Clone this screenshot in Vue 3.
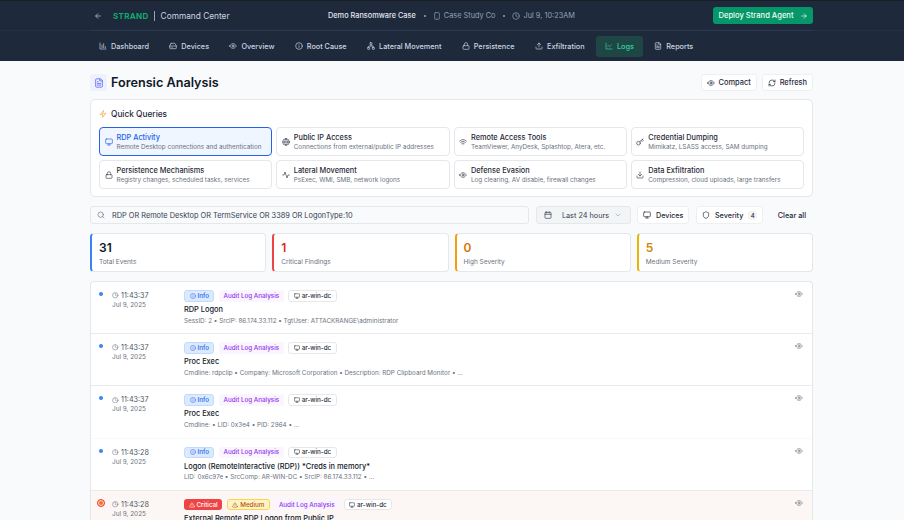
<script setup>
const icons = {
  back: '<path d="M19 12H5"/><path d="m12 19-7-7 7-7"/>',
  arrow: '<path d="M5 12h14"/><path d="m12 5 7 7-7 7"/>',
  tablet: '<rect x="5" y="2" width="14" height="20" rx="2"/><path d="M12 18h.01"/>',
  clock: '<circle cx="12" cy="12" r="10"/><path d="M12 6v6l4 2"/>',
  chart: '<path d="M3 3v18h18"/><path d="M9 17V9"/><path d="M14 17V5"/><path d="M19 17v-3"/>',
  drive: '<path d="M22 12H2"/><path d="M5.45 5.11 2 12v6a2 2 0 0 0 2 2h16a2 2 0 0 0 2-2v-6l-3.45-6.89A2 2 0 0 0 16.76 4H7.24a2 2 0 0 0-1.79 1.11z"/><path d="M6 16h.01"/><path d="M10 16h.01"/>',
  eye: '<path d="M2 12s3.5-7 10-7 10 7 10 7-3.5 7-10 7-10-7-10-7z"/><circle cx="12" cy="12" r="3"/>',
  info: '<circle cx="12" cy="12" r="10"/><path d="M12 16v-4"/><path d="M12 8h.01"/>',
  network: '<rect x="16" y="16" width="6" height="6" rx="1"/><rect x="2" y="16" width="6" height="6" rx="1"/><rect x="9" y="2" width="6" height="6" rx="1"/><path d="M5 16v-3a1 1 0 0 1 1-1h12a1 1 0 0 1 1 1v3"/><path d="M12 12V8"/>',
  lock: '<rect x="3" y="11" width="18" height="11" rx="2"/><path d="M7 11V7a5 5 0 0 1 10 0v4"/>',
  upload: '<path d="M21 15v4a2 2 0 0 1-2 2H5a2 2 0 0 1-2-2v-4"/><path d="m17 8-5-5-5 5"/><path d="M12 3v12"/>',
  line: '<path d="M3 3v18h18"/><path d="m19 9-5 5-4-4-3 3"/>',
  file: '<path d="M15 2H6a2 2 0 0 0-2 2v16a2 2 0 0 0 2 2h12a2 2 0 0 0 2-2V7z"/><path d="M14 2v5h6"/><path d="M16 13H8"/><path d="M16 17H8"/><path d="M10 9H8"/>',
  refresh: '<path d="M3 12a9 9 0 0 1 9-9 9.75 9.75 0 0 1 6.74 2.74L21 8"/><path d="M21 3v5h-5"/><path d="M21 12a9 9 0 0 1-9 9 9.75 9.75 0 0 1-6.74-2.74L3 16"/><path d="M8 16H3v5"/>',
  zap: '<path d="M13 2 3 14h9l-1 8 10-12h-9z"/>',
  monitor: '<rect x="2" y="3" width="20" height="14" rx="2"/><path d="M8 21h8"/><path d="M12 17v4"/>',
  globe: '<circle cx="12" cy="12" r="10"/><path d="M2 12h20"/><path d="M12 2a15 15 0 0 1 4 10 15 15 0 0 1-4 10 15 15 0 0 1-4-10 15 15 0 0 1 4-10z"/>',
  wifi: '<path d="M12 20h.01"/><path d="M2 8.82a15 15 0 0 1 20 0"/><path d="M5 12.86a10 10 0 0 1 14 0"/><path d="M8.5 16.43a5 5 0 0 1 7 0"/>',
  key: '<circle cx="7.5" cy="15.5" r="5.5"/><path d="m21 2-9.6 9.6"/><path d="m15.5 7.5 3 3L22 7l-3-3"/>',
  activity: '<path d="M22 12h-4l-3 9L9 3l-3 9H2"/>',
  download: '<path d="M21 15v4a2 2 0 0 1-2 2H5a2 2 0 0 1-2-2v-4"/><path d="m7 10 5 5 5-5"/><path d="M12 15V3"/>',
  search: '<circle cx="11" cy="11" r="8"/><path d="m21 21-4.3-4.3"/>',
  calendar: '<rect x="3" y="4" width="18" height="18" rx="2"/><path d="M16 2v4"/><path d="M8 2v4"/><path d="M3 10h18"/>',
  chevron: '<path d="m6 9 6 6 6-6"/>',
  shield: '<path d="M20 13c0 5-3.5 7.5-7.66 8.95a1 1 0 0 1-.67-.01C7.5 20.5 4 18 4 13V6a1 1 0 0 1 1-1c2 0 4.5-1.2 6.24-2.72a1.17 1.17 0 0 1 1.52 0C14.51 3.81 17 5 19 5a1 1 0 0 1 1 1z"/>',
  triangle: '<path d="m21.73 18-8-14a2 2 0 0 0-3.48 0l-8 14A2 2 0 0 0 4 21h16a2 2 0 0 0 1.73-3z"/><path d="M12 9v4"/><path d="M12 17h.01"/>'
}
const nav = [
  ['chart', 'Dashboard'], ['drive', 'Devices'], ['eye', 'Overview'], ['info', 'Root Cause'],
  ['network', 'Lateral Movement'], ['lock', 'Persistence'], ['upload', 'Exfiltration'],
  ['line', 'Logs', true], ['file', 'Reports']
]
const queries = [
  ['monitor', 'RDP Activity', 'Remote Desktop connections and authentication', true],
  ['globe', 'Public IP Access', 'Connections from external/public IP addresses'],
  ['wifi', 'Remote Access Tools', 'TeamViewer, AnyDesk, Splashtop, Atera, etc.'],
  ['key', 'Credential Dumping', 'Mimikatz, LSASS access, SAM dumping'],
  ['lock', 'Persistence Mechanisms', 'Registry changes, scheduled tasks, services'],
  ['activity', 'Lateral Movement', 'PsExec, WMI, SMB, network logons'],
  ['eye', 'Defense Evasion', 'Log clearing, AV disable, firewall changes'],
  ['download', 'Data Exfiltration', 'Compression, cloud uploads, large transfers']
]
const stats = [
  ['31', 'Total Events', 'blue'], ['1', 'Critical Findings', 'red'],
  ['0', 'High Severity', 'orange'], ['5', 'Medium Severity', 'amber']
]
const events = [
  { time: '11:43:37', date: 'Jul 9, 2025', title: 'RDP Logon', detail: 'SessID: 2 • SrcIP: 86.174.33.112 • TgtUser: ATTACKRANGE\\administrator' },
  { time: '11:43:37', date: 'Jul 9, 2025', title: 'Proc Exec', detail: 'Cmdline: rdpclip • Company: Microsoft Corporation • Description: RDP Clipboard Monitor • ...' },
  { time: '11:43:37', date: 'Jul 9, 2025', title: 'Proc Exec', detail: 'Cmdline: • LID: 0x3e4 • PID: 2964 • ...', faint: true },
  { time: '11:43:28', date: 'Jul 9, 2025', title: 'Logon (RemoteInteractive (RDP)) *Creds in memory*', detail: 'LID: 0x6c97e • SrcComp: AR-WIN-DC • SrcIP: 86.174.33.112 • ...' },
  { time: '11:43:28', date: 'Jul 9, 2025', title: 'External Remote RDP Logon from Public IP', detail: '', critical: true }
]
</script>

<template>
  <div class="app">
    <header class="top">
      <div class="top-left">
        <svg class="i back" viewBox="0 0 24 24" v-html="icons.back"></svg>
        <span class="brand">STRAND</span>
        <span class="divider"></span>
        <span class="product">Command Center</span>
      </div>
      <div class="case">
        <strong>Demo Ransomware Case</strong>
        <span class="dot"></span>
        <svg class="i" viewBox="0 0 24 24" v-html="icons.tablet"></svg>
        <span>Case Study Co</span>
        <span class="dot"></span>
        <svg class="i" viewBox="0 0 24 24" v-html="icons.clock"></svg>
        <span>Jul 9, 10:23AM</span>
      </div>
      <button class="deploy">Deploy Strand Agent <svg class="i" viewBox="0 0 24 24" v-html="icons.arrow"></svg></button>
    </header>

    <nav class="nav">
      <a v-for="n in nav" :key="n[1]" class="nav-item" :class="{ active: n[2] }">
        <svg class="i" viewBox="0 0 24 24" v-html="icons[n[0]]"></svg>{{ n[1] }}
      </a>
    </nav>

    <main class="page">
      <div class="title-row">
        <span class="title-icon"><svg class="i" viewBox="0 0 24 24" v-html="icons.file"></svg></span>
        <h1>Forensic Analysis</h1>
        <div class="title-actions">
          <button class="btn"><svg class="i" viewBox="0 0 24 24" v-html="icons.eye"></svg>Compact</button>
          <button class="btn"><svg class="i" viewBox="0 0 24 24" v-html="icons.refresh"></svg>Refresh</button>
        </div>
      </div>

      <section class="queries">
        <h2><svg class="i" viewBox="0 0 24 24" v-html="icons.zap"></svg>Quick Queries</h2>
        <div class="query-grid">
          <div v-for="q in queries" :key="q[1]" class="query" :class="{ selected: q[3] }">
            <svg class="i" viewBox="0 0 24 24" v-html="icons[q[0]]"></svg>
            <div>
              <div class="q-title">{{ q[1] }}</div>
              <div class="q-desc">{{ q[2] }}</div>
            </div>
          </div>
        </div>
      </section>

      <div class="filters">
        <div class="search">
          <svg class="i" viewBox="0 0 24 24" v-html="icons.search"></svg>
          <span>RDP OR Remote Desktop OR TermService OR 3389 OR LogonType:10</span>
        </div>
        <div class="select">
          <svg class="i" viewBox="0 0 24 24" v-html="icons.calendar"></svg>
          <span class="select-label">Last 24 hours</span>
          <svg class="i chev" viewBox="0 0 24 24" v-html="icons.chevron"></svg>
        </div>
        <button class="btn filter"><svg class="i" viewBox="0 0 24 24" v-html="icons.monitor"></svg>Devices</button>
        <button class="btn filter"><svg class="i" viewBox="0 0 24 24" v-html="icons.shield"></svg>Severity<span class="count">4</span></button>
        <button class="clear">Clear all</button>
      </div>

      <div class="stats">
        <div v-for="s in stats" :key="s[1]" class="stat" :class="s[2]">
          <div class="num">{{ s[0] }}</div>
          <div class="lbl">{{ s[1] }}</div>
        </div>
      </div>

      <section class="events">
        <article v-for="(e, i) in events" :key="i" class="event" :class="{ critical: e.critical, faint: e.faint }">
          <span class="status"></span>
          <div class="when">
            <div class="time"><svg class="i" viewBox="0 0 24 24" v-html="icons.clock"></svg>{{ e.time }}</div>
            <div class="date">{{ e.date }}</div>
          </div>
          <div class="body">
            <div class="tags">
              <template v-if="e.critical">
                <span class="tag crit"><svg class="i" viewBox="0 0 24 24" v-html="icons.triangle"></svg>Critical</span>
                <span class="tag med"><svg class="i" viewBox="0 0 24 24" v-html="icons.triangle"></svg>Medium</span>
              </template>
              <span v-else class="tag inf"><svg class="i" viewBox="0 0 24 24" v-html="icons.info"></svg>Info</span>
              <span class="tag src">Audit Log Analysis</span>
              <span class="tag host"><svg class="i" viewBox="0 0 24 24" v-html="icons.monitor"></svg>ar-win-dc</span>
            </div>
            <div class="ev-title">{{ e.title }}</div>
            <div class="ev-detail">{{ e.detail }}</div>
          </div>
          <svg class="i view" viewBox="0 0 24 24" v-html="icons.eye"></svg>
        </article>
      </section>
    </main>
  </div>
</template>

<style>
html, body { margin: 0; background: #f8fafc; }
</style>

<style scoped>
.app {
  width: 904px; height: 520px; overflow: hidden; background: #f8fafc;
  font-family: Inter, "Liberation Sans", sans-serif; color: #111827;
  display: flex; flex-direction: column;
}
.i { width: 8px; height: 8px; flex: none; fill: none; stroke: currentColor; stroke-width: 2; stroke-linecap: round; stroke-linejoin: round; }
button { font-family: inherit; cursor: pointer; }

.top {
  height: 31px; box-sizing: border-box; flex: none; background: #1e293b; border-top: 1px solid #1a1d21;
  border-bottom: 1px solid #243044; padding: 0 91px 0 94px; position: relative;
  display: flex; align-items: center; color: #cbd5e1;
}
.top::after { content: ""; position: absolute; left: 90px; right: 91px; bottom: -1px; height: 1px; background: #2c3950; }
.top-left { display: flex; align-items: center; width: 234px; }
.back { color: #cbd5e1; margin-right: 11px; }
.brand { color: #10a971; font-size: 8px; font-weight: 700; letter-spacing: .32px; }
.divider { width: 1px; height: 10px; background: #94a3b8; margin: 0 5.5px 0 5.5px; }
.product { font-size: 8.3px; color: #cbd5e1; }
.case { display: flex; align-items: center; gap: 3px; font-size: 7.35px; color: #94a3b8; flex: 1; }
.case strong { color: #e2e8f0; font-weight: 500; }
.dot { width: 2px; height: 2px; border-radius: 50%; background: #94a3b8; margin: 0 4px 0 5px; }
.deploy {
  background: #059669; color: #f0fdf4; border: 0; border-radius: 3px; height: 17px; width: 100px; padding: 0;
  font-size: 7.6px; font-weight: 500; display: flex; align-items: center; justify-content: center; gap: 6px;
}

.nav {
  height: 30px; box-sizing: border-box; flex: none; background: #1e293b; padding: 0 90px;
  display: flex; align-items: center; gap: 2.4px;
}
.nav-item {
  height: 21px; padding: 0 9px; display: flex; align-items: center; gap: 4px; border-radius: 3px;
  font-size: 7.28px; font-weight: 500; color: #cbd5e1;
}
.nav-item.active { background: #1e4645; color: #34d399; }

.page { padding: 0 91px 0 90px; flex: 1; min-height: 0; }
.title-row { height: 38px; box-sizing: border-box; padding-top: 5px; display: flex; align-items: center; }
.title-icon {
  width: 17px; height: 17px; border-radius: 3px; background: #eef2ff; color: #6366f1;
  display: flex; align-items: center; justify-content: center; margin-right: 4px;
}
.title-icon .i { width: 10px; height: 10px; }
h1 { margin: 0; font-size: 12.65px; font-weight: 600; color: #111827; }
.title-actions { margin-left: auto; display: flex; gap: 5px; }
.btn {
  height: 17px; padding: 0 5px; background: #fff; border: 1px solid #edf0f3; border-radius: 3px; color: #1f2937;
  font-size: 7.4px; font-weight: 500; display: flex; align-items: center; gap: 4px; box-sizing: border-box;
}

.queries { background: #fff; border: 1px solid #e5e7eb; border-radius: 5px; padding: 0 8px 8px; height: 98px; box-sizing: border-box; }
h2 { margin: 0; height: 27px; display: flex; align-items: center; gap: 4px; font-size: 8.3px; font-weight: 500; color: #1f2937; }
h2 .i { color: #eaa63b; }
.query-grid { display: grid; grid-template-columns: repeat(4, 1fr); gap: 4px; }
.query {
  height: 29px; box-sizing: border-box; border: 1px solid #e5e7eb; border-radius: 4px; padding: 1px 5px 0 4.5px;
  display: flex; align-items: center; gap: 4px; background: #fff;
}
.query .i { color: #374151; }
.q-title { font-size: 7.35px; font-weight: 500; color: #1f2937; line-height: 10px; }
.q-desc { font-size: 6.33px; color: #6b7280; line-height: 9px; white-space: nowrap; }
.query.selected { background: #eff6ff; border-color: #2563eb; }
.query.selected .q-title, .query.selected .i { color: #2563eb; }

.filters { display: flex; align-items: center; gap: 6.5px; margin-top: 9px; height: 18px; }
.search {
  flex: none; width: 439px; height: 18px; box-sizing: border-box; border: 1px solid #e5e7eb; border-radius: 3px; background: #f8fafc;
  display: flex; align-items: center; gap: 7px; padding: 0 6px; font-size: 7.37px; color: #374151;
}
.search .i { color: #6b7280; }
.select {
  flex: none; width: 95px; height: 18px; box-sizing: border-box; border: 1px solid #e5e7eb; border-radius: 3px; background: #f3f4f6;
  display: flex; align-items: center; padding: 0 7px; font-size: 7.3px; color: #374151; justify-content: space-between;
}
.select-label { padding-left: 5px; }
.chev { color: #9ca3af; }
.filter { flex: none; height: 18px; padding: 0 5px; gap: 5px; white-space: nowrap; font-size: 7.2px; }
.count { background: #f3f4f6; border-radius: 3px; padding: 1px 2.5px; margin-left: 0; font-size: 6px; }
.clear { flex: none; margin-left: auto; border: 0; background: none; font-size: 7.3px; font-weight: 500; color: #1f2937; padding: 0 7px 0 0; white-space: nowrap; }

.stats { display: grid; grid-template-columns: repeat(4, 1fr); gap: 6px; margin-top: 9px; }
.stat {
  height: 39px; box-sizing: border-box; background: #fff; border: 1px solid #e5e7eb; border-left-width: 2px; border-radius: 4px;
  padding: 6px 7px 0 7px;
}
.num { font-size: 12px; font-weight: 600; line-height: 15px; }
.lbl { font-size: 6.5px; color: #6b7280; line-height: 9px; margin-top: 2.5px; }
.blue { border-left-color: #3b82f6; }
.red { border-left-color: #ef4444; } .red .num { color: #dc2626; }
.orange { border-left-color: #f59e0b; } .orange .num { color: #d97706; }
.amber { border-left-color: #eab308; } .amber .num { color: #ca8a04; }

.events { margin-top: 9px; background: #fff; border: 1px solid #e5e7eb; border-bottom: 0; border-radius: 4px 4px 0 0; }
.event {
  height: 52.2px; box-sizing: border-box; border-bottom: 1px solid #e9ebef; position: relative;
  display: flex; padding: 8px 9px 0 8px;
}
.event.faint { border-bottom-color: #f8f9fb; }
.event.critical { background: #fcf6f5; }
.status { width: 4px; height: 4px; margin-top: 2px; border-radius: 50%; background: #3b82f6; flex: none; }
.critical .status {
  width: 8px; height: 8px; box-sizing: border-box; margin: 0 -2px; border: 1px solid #ef4444; background: #f97316;
  box-shadow: inset 0 0 0 1px #fde0d0;
}
.when { width: 72px; margin-left: 9px; flex: none; }
.time { display: flex; align-items: center; gap: 2.5px; font-size: 7.2px; color: #4b5563; line-height: 9px; margin-top: 1px; }
.time .i { width: 6.5px; height: 6.5px; color: #6b7280; }
.date { font-size: 6.4px; color: #6b7280; line-height: 9px; margin-top: 1px; }
.body { flex: 1; min-width: 0; }
.tags { display: flex; gap: 4.5px; height: 11.5px; }
.tag { display: flex; align-items: center; gap: 2px; height: 11.5px; box-sizing: border-box; border-radius: 3px; padding: 0 4.5px; font-size: 6.28px; font-weight: 500; }
.tag .i { width: 6px; height: 6px; }
.inf { background: #dbeafe; border: 1px solid #bfdbfe; color: #2563eb; }
.crit { background: #ef4444; color: #fff; }
.med { background: #fef3c7; border: 1px solid #fcd34d; color: #b45309; }
.src { background: #faf5ff; color: #9333ea; }
.host { background: #fff; border: 1px solid #e5e7eb; color: #1f2937; }
.ev-title { font-size: 7.4px; font-weight: 500; color: #111827; margin-top: 2.5px; line-height: 11px; }
.ev-detail { font-size: 6.32px; color: #6b7280; margin-top: 1.5px; line-height: 9px; white-space: nowrap; }
.view { width: 8px; height: 8px; color: #6b7280; flex: none; stroke-width: 2; }
</style>
